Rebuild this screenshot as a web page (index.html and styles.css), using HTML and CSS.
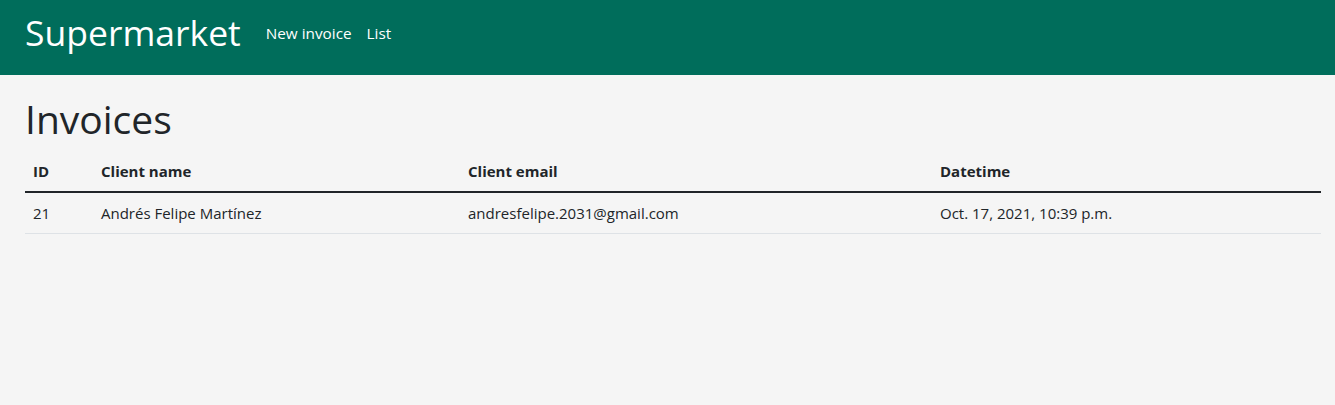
FILE: index.html
```html
<!DOCTYPE html>
<html lang="en">
<head>
<meta charset="utf-8">
<title>Supermarket</title>
<link rel="stylesheet" href="styles.css">
</head>
<body>
<nav class="navbar">
  <a class="brand" href="#">Supermarket</a>
  <ul class="nav-links">
    <li><a href="#">New invoice</a></li>
    <li><a href="#">List</a></li>
  </ul>
</nav>
<main class="content">
  <h1 class="title">Invoices</h1>
  <table class="table">
    <thead>
      <tr>
        <th class="col-id">ID</th>
        <th class="col-name">Client name</th>
        <th class="col-email">Client email</th>
        <th>Datetime</th>
      </tr>
    </thead>
    <tbody>
      <tr>
        <td>21</td>
        <td>Andrés Felipe Martínez</td>
        <td>andresfelipe.2031@gmail.com</td>
        <td>Oct. 17, 2021, 10:39 p.m.</td>
      </tr>
    </tbody>
  </table>
</main>
</body>
</html>
```
FILE: styles.css
```css
* { box-sizing: border-box; }
html, body { margin: 0; padding: 0; }
body {
  background: #f5f5f5;
  color: #212529;
  font-family: "Open Sans", "Noto Sans", sans-serif;
  font-size: 15px;
  line-height: 24px;
}
.navbar {
  background: #006d5b;
  height: 75px;
  display: flex;
  align-items: center;
  padding: 0 25px 12px 25px;
}
.brand {
  color: #fff;
  text-decoration: none;
  font-size: 35.5px;
  line-height: 40px;
  margin-right: 25px;
}
.nav-links {
  list-style: none;
  margin: 0;
  padding: 0;
  display: flex;
  gap: 15px;
  padding-top: 2px;
}
.nav-links a {
  color: #fff;
  text-decoration: none;
  font-size: 15.3px;
}
.content {
  padding: 20px 14px 0 25px;
}
.title {
  margin: 0 0 8px 0;
  font-size: 39px;
  line-height: 48px;
  font-weight: 500;
}
.table {
  width: 100%;
  border-collapse: collapse;
}
.table th, .table td {
  text-align: left;
  padding: 8px;
  height: 40px;
  vertical-align: middle;
}
.table th {
  font-weight: 700;
  border-bottom: 2px solid #212529;
}
.table td {
  border-bottom: 1px solid #dee2e6;
}
.col-id { width: 68px; }
.col-name { width: 367px; }
.col-email { width: 472px; }
```
